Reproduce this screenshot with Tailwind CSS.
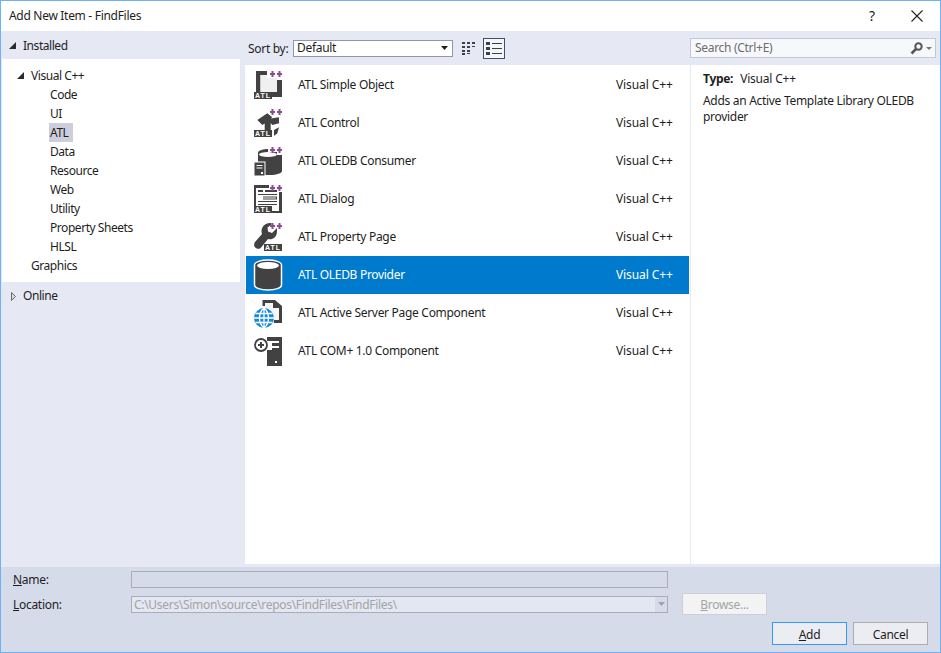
<!DOCTYPE html>
<html lang="en">
<head>
  <meta charset="UTF-8">
  <title>Add New Item - FindFiles</title>
  <script src="https://cdn.jsdelivr.net/npm/@tailwindcss/browser@4"></script>
</head>
<body class="bg-white">
  <div class="w-[941px] h-[653px] border border-[#6db2f7] flex flex-col overflow-hidden font-['Noto_Sans','Open_Sans',sans-serif] text-[12px] leading-[16px] text-[#1e1e1e] tracking-[-0.3px]">

    <!-- Title bar -->
    <div class="h-[30px] shrink-0 bg-white flex items-center pl-[8px]">
      <span class="flex-1">Add New Item - FindFiles</span>
      <span class="w-[20px] text-center text-[14px] mr-[29px]">?</span>
      <svg class="mr-[17px]" width="12" height="12" viewBox="0 0 12 12"><path d="M0.5 0.5 11.5 11.5M11.5 0.5 0.5 11.5" stroke="#222" stroke-width="1.1" fill="none"/></svg>
    </div>

    <!-- Main -->
    <div class="h-[536px] shrink-0 bg-[#e6e9f4] flex">

      <!-- Left tree -->
      <div class="w-[239px] shrink-0 flex flex-col mr-[5px] tracking-[-0.45px]">
        <div class="h-[28px] flex items-center pl-[8px] gap-[8px]">
          <svg width="7" height="7" viewBox="0 0 7 7"><path d="M7 0V7H0Z" fill="#2b2b2b"/></svg>
          <span class="ml-[-1px] pt-[1px]">Installed</span>
        </div>
        <div class="h-[223px] bg-white ml-[1px] pt-[7px] flex flex-col">
          <div class="h-[19px] flex items-center pl-[15px] gap-[7px]">
            <svg width="7" height="7" viewBox="0 0 7 7"><path d="M7 0V7H0Z" fill="#2b2b2b"/></svg>
            <span>Visual C++</span>
          </div>
          <div class="h-[19px] flex items-center pl-[48px]">Code</div>
          <div class="h-[19px] flex items-center pl-[48px]">UI</div>
          <div class="h-[19px] flex items-center pl-[47px]"><span class="bg-[#cccedb] h-[19px] w-[24px] flex items-center pl-[1px]">ATL</span></div>
          <div class="h-[19px] flex items-center pl-[48px]">Data</div>
          <div class="h-[19px] flex items-center pl-[48px]">Resource</div>
          <div class="h-[19px] flex items-center pl-[48px]">Web</div>
          <div class="h-[19px] flex items-center pl-[48px]">Utility</div>
          <div class="h-[19px] flex items-center pl-[48px]">Property Sheets</div>
          <div class="h-[19px] flex items-center pl-[48px]">HLSL</div>
          <div class="h-[19px] flex items-center pl-[29px]">Graphics</div>
        </div>
        <div class="h-[28px] flex items-center pl-[10px] gap-[7px]">
          <svg width="5" height="9" viewBox="0 0 5 9"><path d="M0.5 0.5 4.5 4.5 0.5 8.5Z" fill="#d8dbe4" stroke="#6b6b6b"/></svg>
          <span>Online</span>
        </div>
      </div>

      <!-- Centre -->
      <div class="w-[445px] shrink-0 flex flex-col">
        <div class="h-[34px] shrink-0 flex items-center pl-[3px] relative">
          <span class="w-[45px] pt-[1px]">Sort by:</span>
          <div class="w-[160px] h-[17px] bg-white border border-[#8f98ab] flex items-center pl-[3px] justify-between pr-[4px]">
            <span>Default</span>
            <svg width="7" height="4" viewBox="0 0 7 4"><path d="M0 0H7L3.5 4Z" fill="#1e1e1e"/></svg>
          </div>
          <svg class="ml-[9px]" width="14" height="14" viewBox="0 0 14 14" fill="#3f3f46"><path d="M0 1h3v2H0zM5 1h3v2H5zM10 1h3v2h-3zM0 5h3v2H0zM5 5h3v2H5zM10 5h3v1h-3zM0 9h3v2H0zM5 9h3v2H5zM0 12h3v2H0zM5 12h3v1H5z"/></svg>
          <div class="ml-[7px] w-[22px] h-[21px] border border-[#3e4f72] bg-[#f5f6fa] flex items-center justify-center">
            <svg width="16" height="15" viewBox="0 0 16 15" fill="#3f3f46"><path d="M0 1h4v3H0zM6 2h10v1H6zM0 6h4v3H0zM6 7h10v1H6zM0 11h4v3H0zM6 12h10v1H6z"/></svg>
          </div>
        </div>
        <div class="flex-1 bg-white mb-[3px] flex flex-col pt-[1px] px-[1px]">
          <!-- ATL Simple Object -->
          <div class="h-[38px] flex items-center pl-[7px]">
            <svg class="w-[30px] h-[30px] mr-[15px] shrink-0" viewBox="0 0 30 30">
              <path d="M3 1H14V5H7.500V22H3Z" fill="#424242"/><path d="M24 10H29V27H19V22H24Z" fill="#424242"/><path d="M7.500 5H14V8H24V22H7.500Z" fill="#f0eff1"/>
              <path d="M17 3h5v2h-5zM18.500 1h2v6h-2zM24 3h5v2h-5zM25.500 1h2v6h-2z" fill="#8e4a97"/>
              <rect x="1" y="22" width="18" height="7" fill="#424242"/><text x="10" y="28.300" text-anchor="middle" font-family="Liberation Sans" font-weight="700" font-size="7" letter-spacing="0.9" fill="#fff">ATL</text>
            </svg>
            <span class="flex-1">ATL Simple Object</span><span class="w-[73px] tracking-[-0.1px]">Visual C++</span>
          </div>
          <!-- ATL Control -->
          <div class="h-[38px] flex items-center pl-[7px]">
            <svg class="w-[30px] h-[30px] mr-[15px] shrink-0" viewBox="0 0 30 30">
              <path d="M4.300 12 14.300 5.300 19.300 9.300 17.700 10.500 26 9.300V15.300L19.300 17 17.700 15V22H11.700V15.500L9.300 17Z" fill="#424242"/><path d="M21 22 26 19.300 24.300 25.300 21 28Z" fill="#424242"/>
              <path d="M17 3h5v2h-5zM18.500 1h2v6h-2zM24 3h5v2h-5zM25.500 1h2v6h-2z" fill="#8e4a97"/>
              <rect x="1" y="22" width="18" height="7" fill="#424242"/><text x="10" y="28.300" text-anchor="middle" font-family="Liberation Sans" font-weight="700" font-size="7" letter-spacing="0.9" fill="#fff">ATL</text>
            </svg>
            <span class="flex-1">ATL Control</span><span class="w-[73px] tracking-[-0.1px]">Visual C++</span>
          </div>
          <!-- ATL OLEDB Consumer -->
          <div class="h-[38px] flex items-center pl-[7px]">
            <svg class="w-[30px] h-[30px] mr-[15px] shrink-0" viewBox="0 0 30 30">
              <path d="M5 7C5 4 11 3 15 3V6H24V9L29 9V25C29 27 24 29 17 29H5Z" fill="#424242"/><ellipse cx="15" cy="8.500" rx="9" ry="2.500" fill="#fff"/>
              <path d="M17 3h5v2h-5zM18.500 1h2v6h-2zM24 3h5v2h-5zM25.500 1h2v6h-2z" fill="#8e4a97"/>
              <rect x="1" y="16" width="11" height="14" fill="#424242" stroke="#fff"/><path d="M3.500 19h6v1h-6zM3.500 21.500h6v1h-6z" fill="#fff"/><rect x="8" y="26" width="2" height="2" fill="#fff"/>
            </svg>
            <span class="flex-1">ATL OLEDB Consumer</span><span class="w-[73px] tracking-[-0.1px]">Visual C++</span>
          </div>
          <!-- ATL Dialog -->
          <div class="h-[38px] flex items-center pl-[7px]">
            <svg class="w-[30px] h-[30px] mr-[15px] shrink-0" viewBox="0 0 30 30">
              <path d="M1 1H16V4H3V22H1ZM26 8H29V29H19V27H26Z" fill="#424242"/>
              <path d="M5 6h5v2H5zM12 6h12v2H12zM5 10h19v1H5zM10 12.500h14v3H10v-1h13v-1H10zM5 17h19v1H5zM5 20h19v1H5z" fill="#424242"/>
              <path d="M17 3h5v2h-5zM18.500 1h2v6h-2zM24 3h5v2h-5zM25.500 1h2v6h-2z" fill="#8e4a97"/>
              <rect x="1" y="22" width="18" height="7" fill="#424242"/><text x="10" y="28.300" text-anchor="middle" font-family="Liberation Sans" font-weight="700" font-size="7" letter-spacing="0.9" fill="#fff">ATL</text>
            </svg>
            <span class="flex-1">ATL Dialog</span><span class="w-[73px] tracking-[-0.1px]">Visual C++</span>
          </div>
          <!-- ATL Property Page -->
          <div class="h-[38px] flex items-center pl-[7px]">
            <svg class="w-[30px] h-[30px] mr-[15px] shrink-0" viewBox="0 0 30 30">
              <path d="M17 1C12 1 8.500 5 8.500 9.500C8.500 10.500 9 11.500 9 12L2 20C0.500 22 1 25 3 26C5 27.500 7 27 8.500 25L15 17C19 18 24 16 24 9V6L19 11 15 9.500 14.500 5.500 19 2C18.500 1.500 18 1 17 1Z" fill="#424242"/>
              <path d="M17 3h5v2h-5zM18.500 1h2v6h-2zM24 3h5v2h-5zM25.500 1h2v6h-2z" fill="#8e4a97"/>
              <rect x="11" y="22" width="18" height="7" fill="#424242"/><text x="20" y="28.300" text-anchor="middle" font-family="Liberation Sans" font-weight="700" font-size="7" letter-spacing="0.9" fill="#fff">ATL</text>
            </svg>
            <span class="flex-1">ATL Property Page</span><span class="w-[73px] tracking-[-0.1px]">Visual C++</span>
          </div>
          <!-- ATL OLEDB Provider, selected -->
          <div class="h-[38px] flex items-center pl-[7px] bg-[#007acc] text-white">
            <svg class="w-[30px] h-[32px] mr-[15px] shrink-0" viewBox="0 0 30 32">
              <path d="M1.500 6C1.500 3 8 1 15 1S28.500 3 28.500 6V26C28.500 29 22 31 15 31S1.500 29 1.500 26Z" fill="#424242" stroke="#fff" stroke-width="1.500"/>
              <ellipse cx="15" cy="6.500" rx="11" ry="3.500" fill="#fff"/>
            </svg>
            <span class="flex-1">ATL OLEDB Provider</span><span class="w-[73px] tracking-[-0.1px]">Visual C++</span>
          </div>
          <!-- ATL Active Server Page Component -->
          <div class="h-[38px] flex items-center pl-[7px]">
            <svg class="w-[30px] h-[30px] mr-[15px] shrink-0" viewBox="0 0 30 30">
              <path d="M9.500 2H22L29 8V25H21V22H26V10H20V5H12V8H9.500Z" fill="#424242"/>
              <path d="M12 5H20V10H26V22H20L12 10Z" fill="#f5f5f5"/>
              <circle cx="11" cy="20" r="10" fill="#1a8ad6"/>
              <path d="M1 20H21M2.500 15.500H19.500M2.500 24.500H19.500M11 10V30M11 10C5 15 5 25 11 30M11 10C17 15 17 25 11 30" stroke="#fff" stroke-width="1.300" fill="none"/>
            </svg>
            <span class="flex-1">ATL Active Server Page Component</span><span class="w-[73px] tracking-[-0.1px]">Visual C++</span>
          </div>
          <!-- ATL COM+ 1.0 Component -->
          <div class="h-[38px] flex items-center pl-[7px]">
            <svg class="w-[30px] h-[30px] mr-[15px] shrink-0" viewBox="0 0 30 30">
              <path d="M14 1H29V30H14V14H19V12H26V10H19V7H26V5H14Z" fill="#424242"/>
              <circle cx="8" cy="9" r="6" fill="#fff" stroke="#424242" stroke-width="1.800"/>
              <path d="M5 8h6v2H5zM7 6h2v6H7z" fill="#424242"/>
              <rect x="22" y="25" width="2" height="2" fill="#fff"/>
            </svg>
            <span class="flex-1">ATL COM+ 1.0 Component</span><span class="w-[73px] tracking-[-0.1px]">Visual C++</span>
          </div>
        </div>
      </div>

      <!-- Right panel -->
      <div class="flex-1 flex flex-col border-l border-[#e6e9f4] min-w-0">
        <div class="h-[34px] shrink-0 flex items-center">
          <div class="w-[246px] h-[20px] ml-[-1px] bg-[#f7f8fb] border border-[#c3c8d6] flex items-center pl-[4px] pr-[3px] text-[#6d6d6d]">
            <span class="flex-1">Search (Ctrl+E)</span>
            <svg width="13" height="13" viewBox="0 0 13 13"><circle cx="8.500" cy="4.500" r="3.200" fill="none" stroke="#555" stroke-width="2"/><path d="M6 7 1.500 11.500" stroke="#555" stroke-width="2.500"/></svg>
            <svg class="ml-[3px]" width="6" height="3" viewBox="0 0 6 3"><path d="M0 0H6L3 3Z" fill="#777"/></svg>
          </div>
        </div>
        <div class="flex-1 bg-white mb-[3px] pl-[12px] pt-[6px]">
          <div class="flex gap-[7px] h-[16px] mb-[6px]"><span class="font-bold">Type:</span><span class="tracking-[-0.2px]">Visual C++</span></div>
          <p class="w-[230px]">Adds an Active Template Library OLEDB provider</p>
        </div>
      </div>
    </div>

    <!-- Bottom -->
    <div class="flex-1 bg-[#d6dbe9] relative">
      <div class="flex items-center h-[17px] mt-[4px] pl-[12px]">
        <span class="w-[118px] pt-[1px]"><span class="underline">N</span>ame:</span>
        <div class="w-[537px] h-[17px] border border-[#a8adb9]"></div>
      </div>
      <div class="flex items-center h-[22px] mt-[5px] pl-[12px]">
        <span class="w-[118px] pt-[2px]"><span class="underline">L</span>ocation:</span>
        <div class="w-[537px] h-[17px] border border-[#a8adb9] bg-[#e3e7f2] flex items-center justify-between pl-[2px] text-[#a2a4a5]">
          <span class="pt-[1px]">C:\Users\Simon\source\repos\FindFiles\FindFiles\</span>
          <span class="w-[12px] h-full bg-[#d6dbe9] flex items-center justify-center"><svg width="7" height="4" viewBox="0 0 7 4"><path d="M0 0H7L3.500 4Z" fill="#a2a4a5"/></svg></span>
        </div>
        <div class="ml-[14px] w-[85px] h-[22px] bg-[#f3f3f3] border border-[#ccced8] flex items-center justify-center text-[#a2a4a5]"><span class="pt-[1px]"><span class="underline">B</span>rowse...</span></div>
      </div>
      <div class="flex justify-end gap-[6px] mt-[7px] pr-[12px]">
        <div class="w-[75px] h-[23px] bg-[#ecedf3] border border-[#3399ff] flex items-center justify-center"><span class="pt-[2px]"><span class="underline">A</span>dd</span></div>
        <div class="w-[75px] h-[23px] bg-[#ecedf3] border border-[#acacac] flex items-center justify-center"><span class="pt-[2px]">Cancel</span></div>
      </div>
    </div>
  </div>
</body>
</html>
